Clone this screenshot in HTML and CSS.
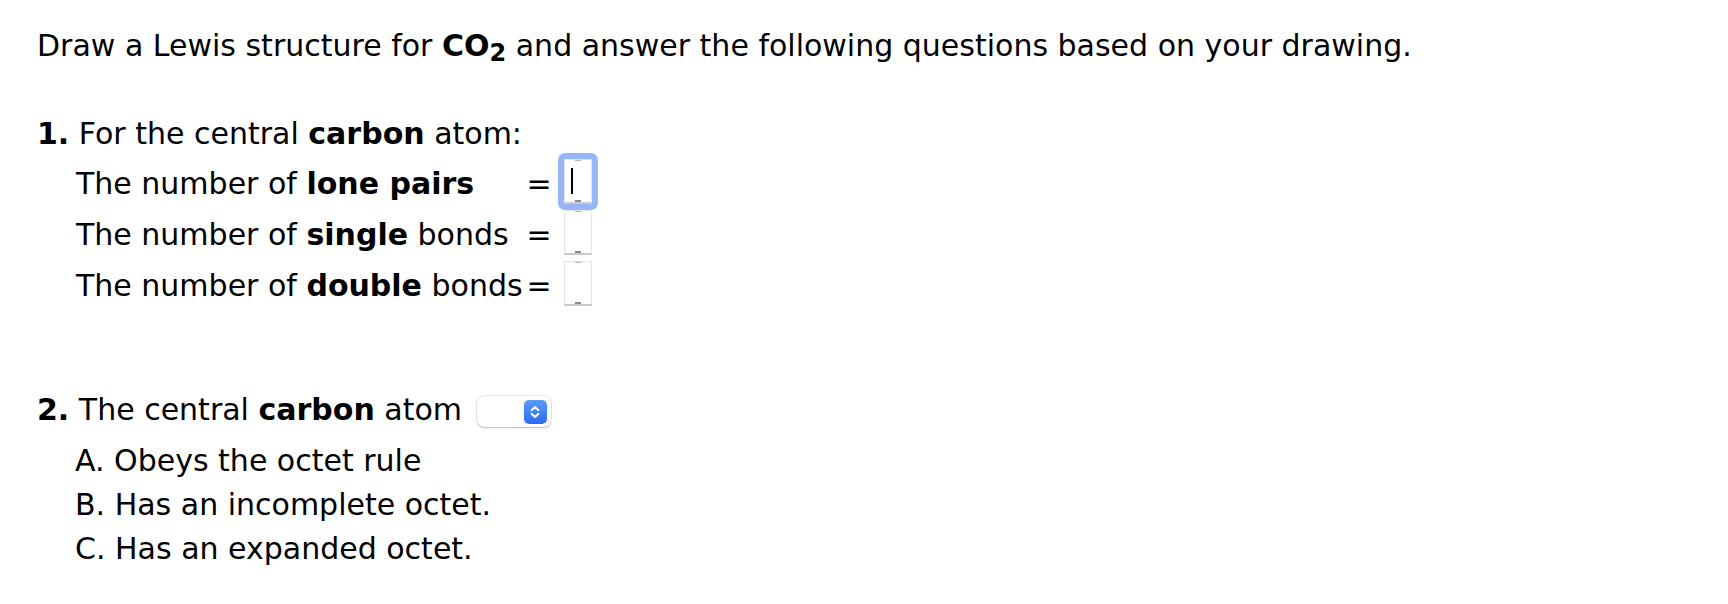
FILE: index.html
```html
<!DOCTYPE html>
<html>
<head>
<meta charset="utf-8">
<title>Lewis structure CO2</title>
<link rel="stylesheet" href="styles.css">
</head>
<body>
<div class="page">
  <p class="intro">Draw a Lewis structure for <b>CO<sub>2</sub></b> and answer the following questions based on your drawing.</p>

  <p class="q q1"><b>1.</b> For the central <b>carbon</b> atom:</p>
  <div class="rows">
    <div class="label">The number of <b>lone pairs</b></div>
    <div class="eq">=</div>
    <div class="cell"><span class="box focused"><span class="caret"></span></span></div>

    <div class="label">The number of <b>single</b> bonds</div>
    <div class="eq">=</div>
    <div class="cell"><span class="box"></span></div>

    <div class="label">The number of <b>double</b> bonds</div>
    <div class="eq">=</div>
    <div class="cell"><span class="box"></span></div>
  </div>

  <p class="q q2"><b>2.</b> The central <b>carbon</b> atom <span class="select"><span class="select-btn"><svg width="14" height="16" viewBox="0 0 14 16"><path d="M3.5 6.2 L7 3 L10.5 6.2" fill="none" stroke="#fff" stroke-width="2" stroke-linecap="round" stroke-linejoin="round"/><path d="M3.5 9.8 L7 13 L10.5 9.8" fill="none" stroke="#fff" stroke-width="2" stroke-linecap="round" stroke-linejoin="round"/></svg></span></span></p>
  <ul class="options">
    <li>A. Obeys the octet rule</li>
    <li>B. Has an incomplete octet.</li>
    <li>C. Has an expanded octet.</li>
  </ul>
</div>
</body>
</html>
```

FILE: styles.css
```css
html, body {
  margin: 0;
  padding: 0;
  background: #ffffff;
}

.page {
  font-family: "DejaVu Sans", Verdana, sans-serif;
  font-size: 30px;
  line-height: 44px;
  color: #000;
  padding: 24px 0 0 37px;
}

p {
  margin: 0;
}

.intro sub {
  font-size: 0.8em;
  line-height: 1;
  vertical-align: -0.22em;
}

.q1 {
  margin-top: 44px;
}

.rows {
  display: grid;
  grid-template-columns: max-content max-content max-content;
  grid-auto-rows: 51px;
  align-items: center;
  padding-left: 39px;
}

.label {
  padding-top: 4px;
}

.eq {
  padding: 4px 12px 0 4px;
}

.cell {
  display: flex;
  align-items: center;
}

.box {
  display: block;
  position: relative;
  width: 26px;
  height: 42px;
  background-color: #fff;
  border: 1px solid #e3e3e3;
  border-bottom: 2px solid #c9c9c9;
  background-image:
    linear-gradient(#8a8a8a, #8a8a8a),
    linear-gradient(#b0b0b0, #b0b0b0);
  background-size: 6px 2px, 6px 1px;
  background-position: center bottom, center top;
  background-repeat: no-repeat;
}

.box.focused {
  outline: 6px solid #97b6f6;
  border-radius: 1px;
}

.caret {
  position: absolute;
  left: 6px;
  top: 8px;
  width: 2px;
  height: 26px;
  background: #000;
}

.q2 {
  margin-top: 79px;
}

.select {
  display: inline-flex;
  justify-content: flex-end;
  align-items: center;
  vertical-align: middle;
  box-sizing: border-box;
  width: 74px;
  height: 31px;
  margin-left: 5px;
  padding-right: 4px;
  background: #fff;
  border-radius: 7px;
  box-shadow: 0 0 0 0.5px rgba(0, 0, 0, 0.14), 0 1px 2px rgba(0, 0, 0, 0.22);
}

.select-btn {
  display: flex;
  align-items: center;
  justify-content: center;
  width: 23px;
  height: 24px;
  border-radius: 5px;
  background: linear-gradient(#5c9bfb, #2d6cf0);
}

.select-btn svg {
  display: block;
}

.options {
  list-style: none;
  margin: 7px 0 0 0;
  padding: 0 0 0 38px;
}
```
